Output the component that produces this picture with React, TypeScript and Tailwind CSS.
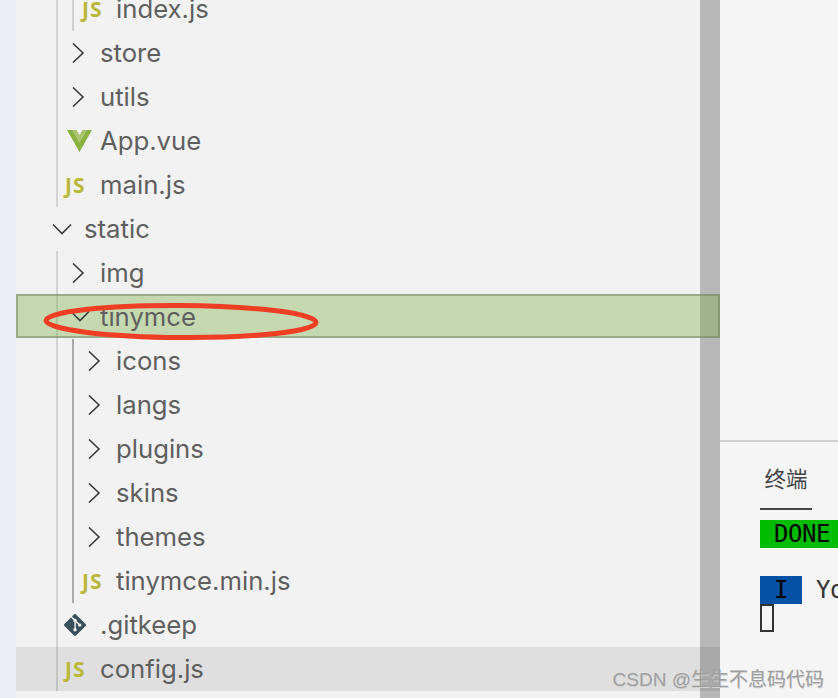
import type { ReactNode } from "react";
import { SiGit } from "react-icons/si";

const uiFont = "font-['Inter','Noto_Sans',sans-serif]";
const labelClass = "text-[25.7px] leading-none text-[#5f5f5f]";

const Chevron = ({ open = false }: { open?: boolean }) => (
  <svg width="20" height="20" viewBox="0 0 20 20" fill="none" stroke="#3b3b3b" strokeWidth="1.6">
    {open ? <path d="M1 5.5 L10 14.5 L19 5.5" /> : <path d="M5 .5 L15 10 L5 19.5" />}
  </svg>
);

const JsIcon = () => (
  <span className="text-[21px] leading-none font-bold tracking-[1px] text-[#b8b938] font-['Open_Sans',sans-serif]">JS</span>
);

const VueIcon = () => (
  <svg width="25" height="22" viewBox="0 0 25 22">
    <path d="M0 0 H5.5 L12.5 12 L19.5 0 H25 L12.5 22 Z" fill="#8ab240" />
    <path d="M5.5 0 H9.5 L12.5 5 L15.5 0 H19.5 L12.5 12 Z" fill="#a9c46c" />
  </svg>
);

const Row = ({ pad, slot, icon, label }: { pad: string; slot: string; icon?: ReactNode; label: string }) => (
  <div className={`flex h-11 items-center ${pad}`}>
    <div className={`flex shrink-0 items-center ${slot}`}>{icon}</div>
    <span className={labelClass}>{label}</span>
  </div>
);

const Folder = ({ label }: { label: string }) => (
  <Row pad="pl-[10px]" slot="w-8" icon={<Chevron />} label={label} />
);

export default function App() {
  return (
    <div className={`relative flex h-[698px] w-[838px] overflow-hidden bg-[#f5f5f5] ${uiFont}`}>
      <div className="w-4 shrink-0 bg-[#ecedf7]" />

      {/* explorer tree */}
      <div className="w-[684px] shrink-0 bg-[#f2f2f2]">
        <div className="-mt-[13px] ml-[40px] border-l-2 border-[#d4d4d4]">
          <div className="ml-[14px] border-l-2 border-[#d0d0d0]">
            <Row pad="pl-[8px]" slot="w-[34px]" icon={<JsIcon />} label="index.js" />
          </div>
          <Folder label="store" />
          <Folder label="utils" />
          <Row pad="pl-[9px]" slot="w-[33px]" icon={<VueIcon />} label="App.vue" />
          <Row pad="pl-[7px]" slot="w-[35px]" icon={<JsIcon />} label="main.js" />
        </div>

        <Row pad="pl-[36px]" slot="w-8" icon={<Chevron open />} label="static" />

        <div className="ml-[40px] border-l-2 border-[#d4d4d4]">
          <Folder label="img" />

          {/* selected folder, runs under the scrollbar */}
          <div className="relative z-10 -mt-px mb-px -ml-[42px] flex h-11 w-[704px] items-center border-2 border-[#6f7f5f]/50 bg-[#77aa3e]/[0.37] pl-[52px]">
            <div className="w-[30px] shrink-0"><Chevron open /></div>
            <span className={`${labelClass} mt-[2px]`}>tinymce</span>
          </div>

          <div className="ml-[14px] border-l-2 border-[#a9a9a9]">
            <Folder label="icons" />
            <Folder label="langs" />
            <Folder label="plugins" />
            <Folder label="skins" />
            <Folder label="themes" />
            <Row pad="pl-[8px]" slot="w-[34px]" icon={<JsIcon />} label="tinymce.min.js" />
          </div>

          <Row pad="pl-[6px]" slot="w-9" icon={<SiGit size={22} color="#37505c" />} label=".gitkeep" />

          <div className="relative z-10 -ml-[42px] flex h-11 w-[704px] items-center bg-black/[0.08] pl-[49px]">
            <div className="flex w-[35px] shrink-0 items-center"><JsIcon /></div>
            <span className={labelClass}>config.js</span>
          </div>
        </div>
      </div>

      {/* scrollbar */}
      <div className="w-5 shrink-0 bg-[#b8b8b8]" />

      {/* editor + terminal */}
      <div className="flex min-w-0 flex-1 flex-col overflow-hidden">
        <div className="h-[442px] shrink-0 border-b-2 border-[#d0d0d0]" />
        <div className="pl-10">
          <div className="w-[52px] border-b-2 border-[#444444] pt-[22px] pb-[16px] text-center text-[21.5px] leading-[28px] text-[#444444] font-['Noto_Sans_CJK_SC',sans-serif]">
            终端
          </div>
          <div className="mt-[10px] font-['DejaVu_Sans_Mono',monospace] text-[24px] leading-7 tracking-[-0.45px] whitespace-pre">
            <div className="w-[90px] bg-[#00bc00] pl-[14px] text-black">DONE</div>
            <div className="h-7" />
            <div className="flex">
              <span className="w-[42px] shrink-0 bg-[#0451a5] text-center text-black">I</span>
              <span className="ml-[14px] text-[#333333]">You</span>
            </div>
            <div className="h-7 w-[14px] border-2 border-[#333333]" />
          </div>
        </div>
      </div>

      {/* red annotation drawn over the screenshot */}
      <svg className="absolute top-0 left-0 z-20" width="838" height="698" fill="none">
        <ellipse cx="181" cy="321.5" rx="135" ry="16" stroke="#ee3f24" strokeWidth="5" transform="rotate(0.4 181 321)" />
      </svg>

      {/* watermark */}
      <span className="absolute right-[14px] bottom-[6px] z-20 text-[19px] leading-6 text-[#a0a0a0] [text-shadow:0.5px_0.5px_0.5px_#d0d0d0] font-['Liberation_Sans','Noto_Sans_CJK_SC',sans-serif]">
        CSDN @生生不息码代码
      </span>
    </div>
  );
}
